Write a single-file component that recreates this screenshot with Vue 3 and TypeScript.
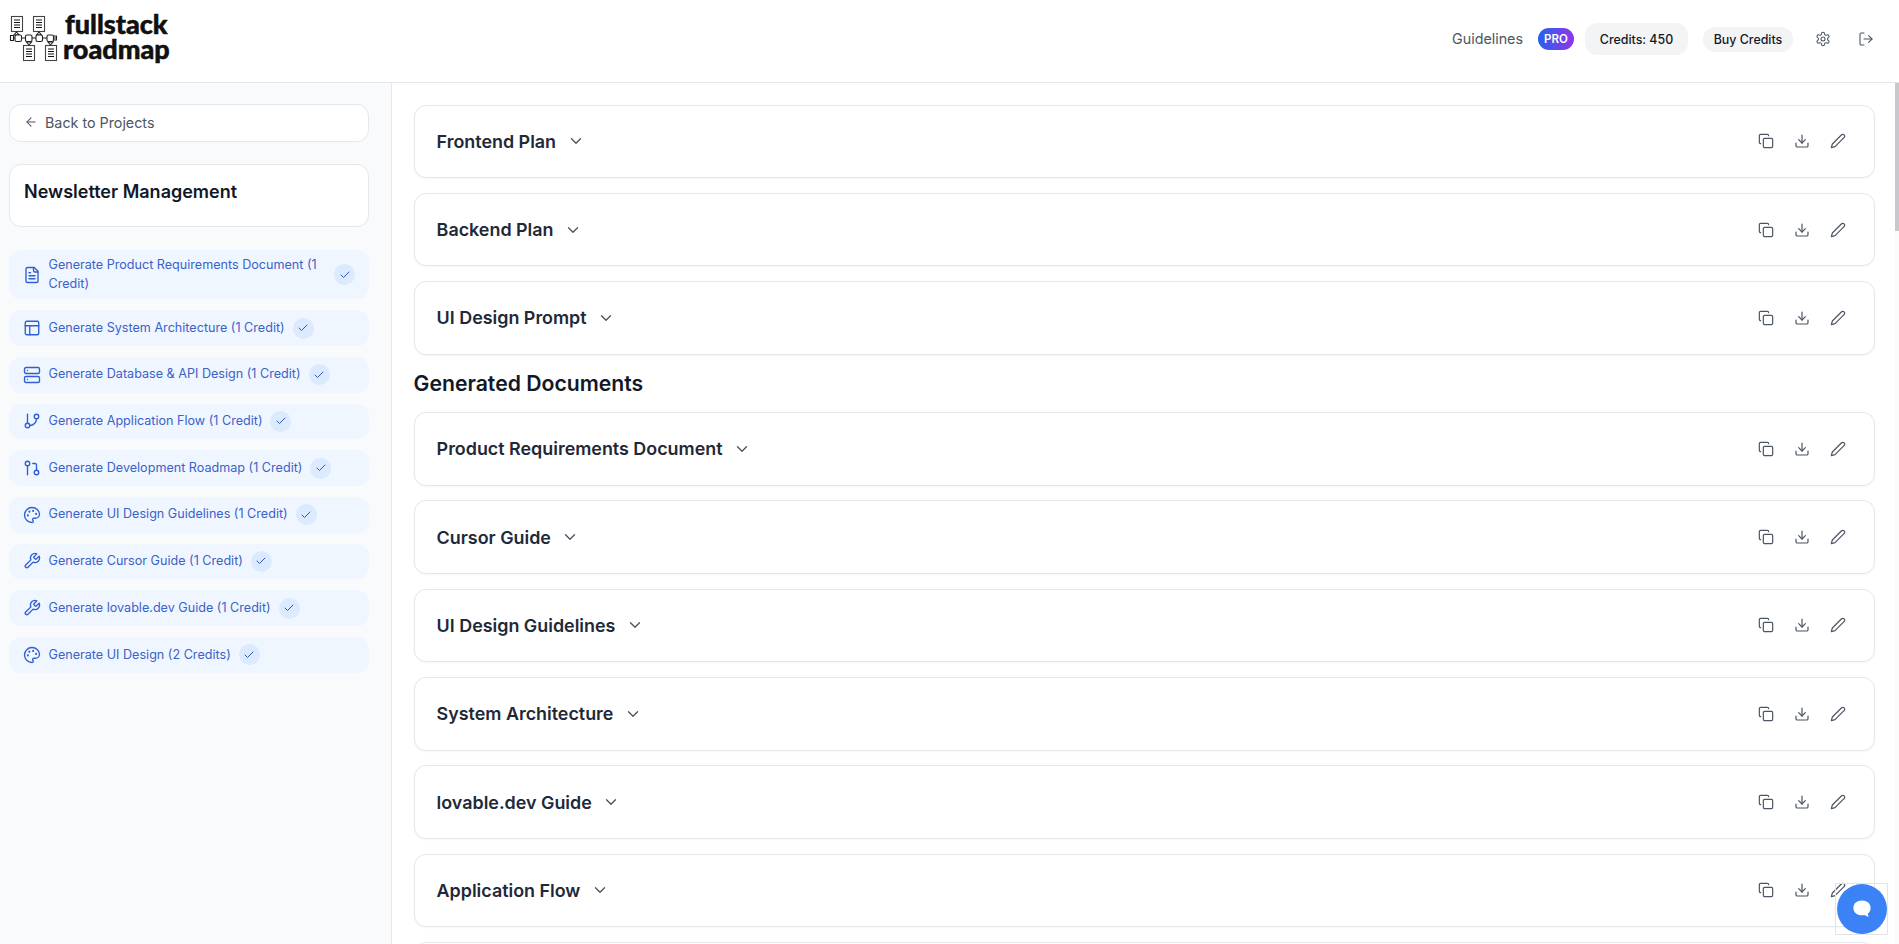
<script setup lang="ts">
const c = (x: number, y: number, r: number) => `M${x - r} ${y}a${r} ${r} 0 1 0 ${r * 2} 0a${r} ${r} 0 1 0 ${-r * 2} 0`
const rr = (x: number, y: number, w: number, h: number, r: number) =>
  `M${x + r} ${y}h${w - 2 * r}a${r} ${r} 0 0 1 ${r} ${r}v${h - 2 * r}a${r} ${r} 0 0 1 ${-r} ${r}h${-(w - 2 * r)}a${r} ${r} 0 0 1 ${-r} ${-r}v${-(h - 2 * r)}a${r} ${r} 0 0 1 ${r} ${-r}z`

const icons: Record<string, string[]> = {
  file: ['M15 2H6a2 2 0 0 0-2 2v16a2 2 0 0 0 2 2h12a2 2 0 0 0 2-2V7Z', 'M14 2v4a2 2 0 0 0 2 2h4', 'M10 9H8', 'M16 13H8', 'M16 17H8'],
  layout: [rr(3, 3, 18, 18, 2), 'M3 9h18', 'M9 21V9'],
  server: [rr(2, 2, 20, 8, 2), rr(2, 14, 20, 8, 2), 'M6 6h.01', 'M6 18h.01'],
  branch: ['M6 3v12', c(18, 6, 3), c(6, 18, 3), 'M18 9a9 9 0 0 1-9 9'],
  pull: [c(18, 18, 3), c(6, 6, 3), 'M13 6h3a2 2 0 0 1 2 2v7', 'M6 9v12'],
  palette: [
    c(13.5, 6.5, 0.5), c(17.5, 10.5, 0.5), c(8.5, 7.5, 0.5), c(6.5, 12.5, 0.5),
    'M12 2C6.5 2 2 6.5 2 12s4.5 10 10 10c.926 0 1.648-.746 1.648-1.688 0-.437-.18-.835-.437-1.125-.29-.289-.438-.652-.438-1.125a1.64 1.64 0 0 1 1.668-1.668h1.996c3.051 0 5.555-2.503 5.555-5.554C21.965 6.012 17.461 2 12 2z'
  ],
  wrench: ['M14.7 6.3a1 1 0 0 0 0 1.4l1.6 1.6a1 1 0 0 0 1.4 0l3.77-3.77a6 6 0 0 1-7.94 7.94l-6.91 6.91a2.12 2.12 0 0 1-3-3l6.91-6.91a6 6 0 0 1 7.94-7.94l-3.76 3.76z'],
  check: ['M20 6 9 17l-5-5'],
  arrow: ['m12 19-7-7 7-7', 'M19 12H5'],
  chevron: ['m6 9 6 6 6-6'],
  copy: [rr(8, 8, 14, 14, 2), 'M4 16c-1.1 0-2-.9-2-2V4c0-1.1.9-2 2-2h10c1.1 0 2 .9 2 2'],
  download: ['M21 15v4a2 2 0 0 1-2 2H5a2 2 0 0 1-2-2v-4', 'M7 10l5 5 5-5', 'M12 15V3'],
  pencil: ['M17 3a2.85 2.83 0 1 1 4 4L7.5 20.5 2 22l1.5-5.5Z'],
  settings: [
    'M12.22 2h-.44a2 2 0 0 0-2 2v.18a2 2 0 0 1-1 1.73l-.43.25a2 2 0 0 1-2 0l-.15-.08a2 2 0 0 0-2.73.73l-.22.38a2 2 0 0 0 .73 2.73l.15.1a2 2 0 0 1 1 1.72v.51a2 2 0 0 1-1 1.74l-.15.09a2 2 0 0 0-.73 2.73l.22.38a2 2 0 0 0 2.73.73l.15-.08a2 2 0 0 1 2 0l.43.25a2 2 0 0 1 1 1.73V20a2 2 0 0 0 2 2h.44a2 2 0 0 0 2-2v-.18a2 2 0 0 1 1-1.73l.43-.25a2 2 0 0 1 2 0l.15.08a2 2 0 0 0 2.73-.73l.22-.39a2 2 0 0 0-.73-2.73l-.15-.08a2 2 0 0 1-1-1.74v-.5a2 2 0 0 1 1-1.74l.15-.09a2 2 0 0 0 .73-2.73l-.22-.38a2 2 0 0 0-2.73-.73l-.15.08a2 2 0 0 1-2 0l-.43-.25a2 2 0 0 1-1-1.73V4a2 2 0 0 0-2-2z',
    c(12, 12, 3)
  ],
  logout: ['M9 21H5a2 2 0 0 1-2-2V5a2 2 0 0 1 2-2h4', 'M16 17l5-5-5-5', 'M21 12H9']
}

const steps = [
  { icon: 'file', label: 'Generate Product Requirements Document (1 Credit)' },
  { icon: 'layout', label: 'Generate System Architecture (1 Credit)' },
  { icon: 'server', label: 'Generate Database & API Design (1 Credit)' },
  { icon: 'branch', label: 'Generate Application Flow (1 Credit)' },
  { icon: 'pull', label: 'Generate Development Roadmap (1 Credit)' },
  { icon: 'palette', label: 'Generate UI Design Guidelines (1 Credit)' },
  { icon: 'wrench', label: 'Generate Cursor Guide (1 Credit)' },
  { icon: 'wrench', label: 'Generate lovable.dev Guide (1 Credit)' },
  { icon: 'palette', label: 'Generate UI Design (2 Credits)' }
]

const plans = ['Frontend Plan', 'Backend Plan', 'UI Design Prompt']
const documents = [
  'Product Requirements Document',
  'Cursor Guide',
  'UI Design Guidelines',
  'System Architecture',
  'lovable.dev Guide',
  'Application Flow'
]
const actions = ['copy', 'download', 'pencil']

const logoDocs = [
  [11, 16],
  [33, 16],
  [23, 45],
  [45, 45]
]
const logoNodes = [15, 25.5, 36, 47]
</script>

<template>
  <div class="app">
    <header class="topbar">
      <div class="brand">
        <svg class="brand-mark" width="60" height="62" viewBox="0 0 60 62" fill="none" stroke="#222" stroke-width="1.1">
          <g v-for="d in logoDocs" :key="d[0]">
            <rect :x="d[0] + 0.5" :y="d[1] + 0.5" width="11" height="15" fill="#fff" stroke="#444" />
            <path :d="`M${d[0] + 3} ${d[1] + 4}h6M${d[0] + 3} ${d[1] + 6.5}h6M${d[0] + 3} ${d[1] + 9}h6M${d[0] + 3} ${d[1] + 11.5}h6`" stroke="#111" />
          </g>
          <path d="M16.500 32l-2.500 3h5zM39 32l-2.500 3h5zM29 45l-2.500-3h5zM50.500 45l-2.500-3h5z" fill="#fff" />
          <path d="M10.500 35.500h3v5h-3zM53.500 36h3v4h-3z" />
          <path d="M13 38h44" />
          <rect v-for="n in logoNodes" :key="n" :x="n" y="35" width="6.500" height="6.500" rx="1.500" fill="#fff" stroke="#222" />
        </svg>
        <div class="brand-name">
          <span>fullstack</span>
          <span class="brand-second">roadmap</span>
        </div>
      </div>
      <nav class="top-actions">
        <span class="guidelines">Guidelines</span>
        <span class="pro">PRO</span>
        <span class="credits">Credits: 450</span>
        <span class="buy">Buy Credits</span>
        <svg class="top-icon gear" viewBox="0 0 24 24"><path v-for="d in icons.settings" :key="d" :d="d" /></svg>
        <svg class="top-icon" viewBox="0 0 24 24"><path v-for="d in icons.logout" :key="d" :d="d" /></svg>
      </nav>
    </header>

    <div class="body">
      <aside class="sidebar">
        <button class="back" type="button">
          <svg class="back-icon" viewBox="0 0 24 24"><path v-for="d in icons.arrow" :key="d" :d="d" /></svg>
          <span>Back to Projects</span>
        </button>
        <section class="project">
          <h2>Newsletter Management</h2>
        </section>
        <ul class="steps">
          <li v-for="s in steps" :key="s.label" class="step">
            <svg class="step-icon" viewBox="0 0 24 24"><path v-for="d in icons[s.icon]" :key="d" :d="d" /></svg>
            <span class="step-label">{{ s.label }}</span>
            <span class="done">
              <svg viewBox="0 0 24 24"><path v-for="d in icons.check" :key="d" :d="d" /></svg>
            </span>
          </li>
        </ul>
      </aside>

      <main class="main">
        <article v-for="p in plans" :key="p" class="doc">
          <h3>{{ p }}</h3>
          <svg class="chev" viewBox="0 0 24 24"><path v-for="d in icons.chevron" :key="d" :d="d" /></svg>
          <div class="doc-actions">
            <svg v-for="a in actions" :key="a" class="act" viewBox="0 0 24 24"><path v-for="d in icons[a]" :key="d" :d="d" /></svg>
          </div>
        </article>
        <h2 class="section-title">Generated Documents</h2>
        <article v-for="p in documents" :key="p" class="doc">
          <h3>{{ p }}</h3>
          <svg class="chev" viewBox="0 0 24 24"><path v-for="d in icons.chevron" :key="d" :d="d" /></svg>
          <div class="doc-actions">
            <svg v-for="a in actions" :key="a" class="act" viewBox="0 0 24 24"><path v-for="d in icons[a]" :key="d" :d="d" /></svg>
          </div>
        </article>
        <article class="doc"></article>
        <div class="scrollbar"><div class="thumb"></div></div>
      </main>
    </div>

    <div class="chat-frame">
      <button class="chat" type="button" aria-label="Chat">
        <svg width="20" height="20" viewBox="0 0 20 20"><path d="M10 1.500c5 0 8.600 3 8.600 7.400 0 2.400-1 4.300-2.700 5.600l.6 3.600-4.200-2.100c-.7.2-1.500.3-2.300.3-5 0-8.600-3-8.600-7.400S5 1.500 10 1.500z" fill="#fff" /></svg>
      </button>
    </div>
  </div>
</template>

<style>
html, body {
  margin: 0;
  overflow: hidden;
}
</style>

<style scoped>
.app {
  position: relative;
  height: 944px;
  overflow: hidden;
  display: flex;
  flex-direction: column;
  background: #fff;
  font-family: Inter, "Liberation Sans", sans-serif;
  color: #111827;
}
.topbar {
  flex: none;
  height: 82px;
  box-sizing: content-box;
  border-bottom: 1px solid #e5e7eb;
  display: flex;
  align-items: center;
  justify-content: space-between;
  padding: 0 25px 0 0;
}
.brand {
  display: flex;
  align-items: center;
  height: 82px;
}
.brand-mark {
  flex: none;
  width: 60px;
  height: 62px;
  margin-right: 3px;
  align-self: flex-start;
}
.brand-name {
  display: flex;
  flex-direction: column;
  font-family: Lato, sans-serif;
  font-weight: 900;
  font-size: 27px;
  line-height: 25px;
  color: #111;
  -webkit-text-stroke: 0.5px #111;
  margin-top: -10px;
}
.brand-name span:first-child {
  margin-left: 2px;
}
.top-actions {
  display: flex;
  align-items: center;
  height: 82px;
  padding-bottom: 4px;
  box-sizing: border-box;
}
.guidelines {
  font-size: 14.3px;
  color: #4b5563;
  margin-right: 15px;
  margin-top: -1px;
}
.pro {
  height: 22px;
  width: 36px;
  border-radius: 11px;
  background: linear-gradient(90deg, #2563eb, #9333ea);
  color: #fff;
  font-size: 11.5px;
  font-weight: 600;
  display: flex;
  align-items: center;
  justify-content: center;
  margin-right: 11px;
}
.credits {
  height: 32px;
  width: 103px;
  border-radius: 12px;
  background: #f3f4f6;
  font-size: 12.4px;
  font-weight: 500;
  display: flex;
  align-items: center;
  justify-content: center;
  margin-right: 15px;
}
.buy {
  height: 25px;
  width: 90px;
  border-radius: 12px;
  background: #f3f4f6;
  font-size: 12.4px;
  font-weight: 500;
  display: flex;
  align-items: center;
  justify-content: center;
  margin-right: 22px;
}
.top-icon {
  width: 16px;
  height: 16px;
  fill: none;
  stroke: #4b5563;
  stroke-width: 1.6;
  stroke-linecap: round;
  stroke-linejoin: round;
}
.gear {
  margin-right: 27px;
}
.body {
  flex: 1;
  min-height: 0;
  display: flex;
}
.sidebar {
  flex: none;
  width: 391px;
  box-sizing: content-box;
  border-right: 1px solid #e5e7eb;
  background: #f9fafc;
  padding: 21px 0 0;
}
.back {
  display: flex;
  align-items: center;
  width: 360px;
  height: 38px;
  box-sizing: border-box;
  margin: 0 0 22px 9px;
  padding: 0 0 2px 14px;
  border: 1px solid #e5e7eb;
  border-radius: 12px;
  background: #fff;
  font: 14.3px Inter, sans-serif;
  color: #4b5563;
}
.back-icon {
  width: 14px;
  height: 14px;
  margin-right: 7px;
  fill: none;
  stroke: #4b5563;
  stroke-width: 1.8;
  stroke-linecap: round;
  stroke-linejoin: round;
}
.project {
  width: 360px;
  height: 63px;
  box-sizing: border-box;
  margin: 0 0 23px 9px;
  padding: 15px 14px;
  border: 1px solid #e5e7eb;
  border-radius: 12px;
  background: #fff;
}
.project h2 {
  margin: 0;
  font-size: 18px;
  line-height: 24px;
  font-weight: 600;
  color: #111827;
}
.steps {
  list-style: none;
  margin: 0;
  padding: 0 0 0 9px;
  display: flex;
  flex-direction: column;
  gap: 11px;
}
.step {
  width: 360px;
  min-height: 35.7px;
  box-sizing: border-box;
  display: flex;
  align-items: center;
  padding: 6px 14px;
  border-radius: 12px;
  background: #f0f6ff;
}
.step-icon {
  flex: none;
  width: 18px;
  height: 18px;
  margin-right: 7.5px;
  fill: none;
  stroke: #2f5fd0;
  stroke-width: 1.8;
  stroke-linecap: round;
  stroke-linejoin: round;
}
.step-label {
  font-size: 12.6px;
  line-height: 18.6px;
  color: #3a62c8;
  margin-right: 8px;
}
.done {
  flex: none;
  width: 21px;
  height: 21px;
  border-radius: 50%;
  background: #dbeafe;
  display: flex;
  align-items: center;
  justify-content: center;
}
.done svg {
  width: 12px;
  height: 12px;
  fill: none;
  stroke: #3158b8;
  stroke-width: 2;
  stroke-linecap: round;
  stroke-linejoin: round;
}
.main {
  position: relative;
  flex: 1;
  min-width: 0;
  overflow: hidden;
  padding: 21.6px 24px 0 21.6px;
  display: flex;
  flex-direction: column;
  gap: 14.7px;
}
.doc {
  flex: none;
  height: 73.6px;
  box-sizing: border-box;
  display: flex;
  align-items: center;
  padding: 0 22px;
  border: 1px solid #e5e7eb;
  border-radius: 12px;
  background: #fff;
  box-shadow: 0 1px 2px rgba(0, 0, 0, 0.04);
}
.doc h3 {
  margin: 0;
  font-size: 17.9px;
  font-weight: 600;
  color: #1f2937;
}
.chev {
  width: 18px;
  height: 18px;
  margin-left: 10.5px;
  fill: none;
  stroke: #4b5563;
  stroke-width: 1.8;
  stroke-linecap: round;
  stroke-linejoin: round;
}
.doc-actions {
  margin-left: auto;
  display: flex;
  gap: 20px;
  margin-right: 6px;
}
.act {
  width: 16px;
  height: 16px;
  fill: none;
  stroke: #4b5563;
  stroke-width: 1.8;
  stroke-linecap: round;
  stroke-linejoin: round;
}
.section-title {
  margin: 1px 0 0;
  height: 27.2px;
  font-size: 21.2px;
  line-height: 27px;
  font-weight: 600;
  color: #111827;
}
.scrollbar {
  position: absolute;
  top: 0;
  right: 0;
  bottom: 0;
  width: 4px;
  background: #fafafa;
}
.thumb {
  width: 4px;
  height: 148px;
  background: #c8c8cc;
}
.chat-frame {
  position: absolute;
  left: 1835px;
  top: 883px;
  width: 53px;
  height: 52px;
  box-sizing: border-box;
  border: 1px solid #e4e4e7;
}
.chat {
  position: absolute;
  left: 1px;
  top: 0;
  width: 50px;
  height: 50px;
  padding: 0;
  border: none;
  border-radius: 50%;
  background: #3b82f6;
  display: flex;
  align-items: center;
  justify-content: center;
}
</style>
